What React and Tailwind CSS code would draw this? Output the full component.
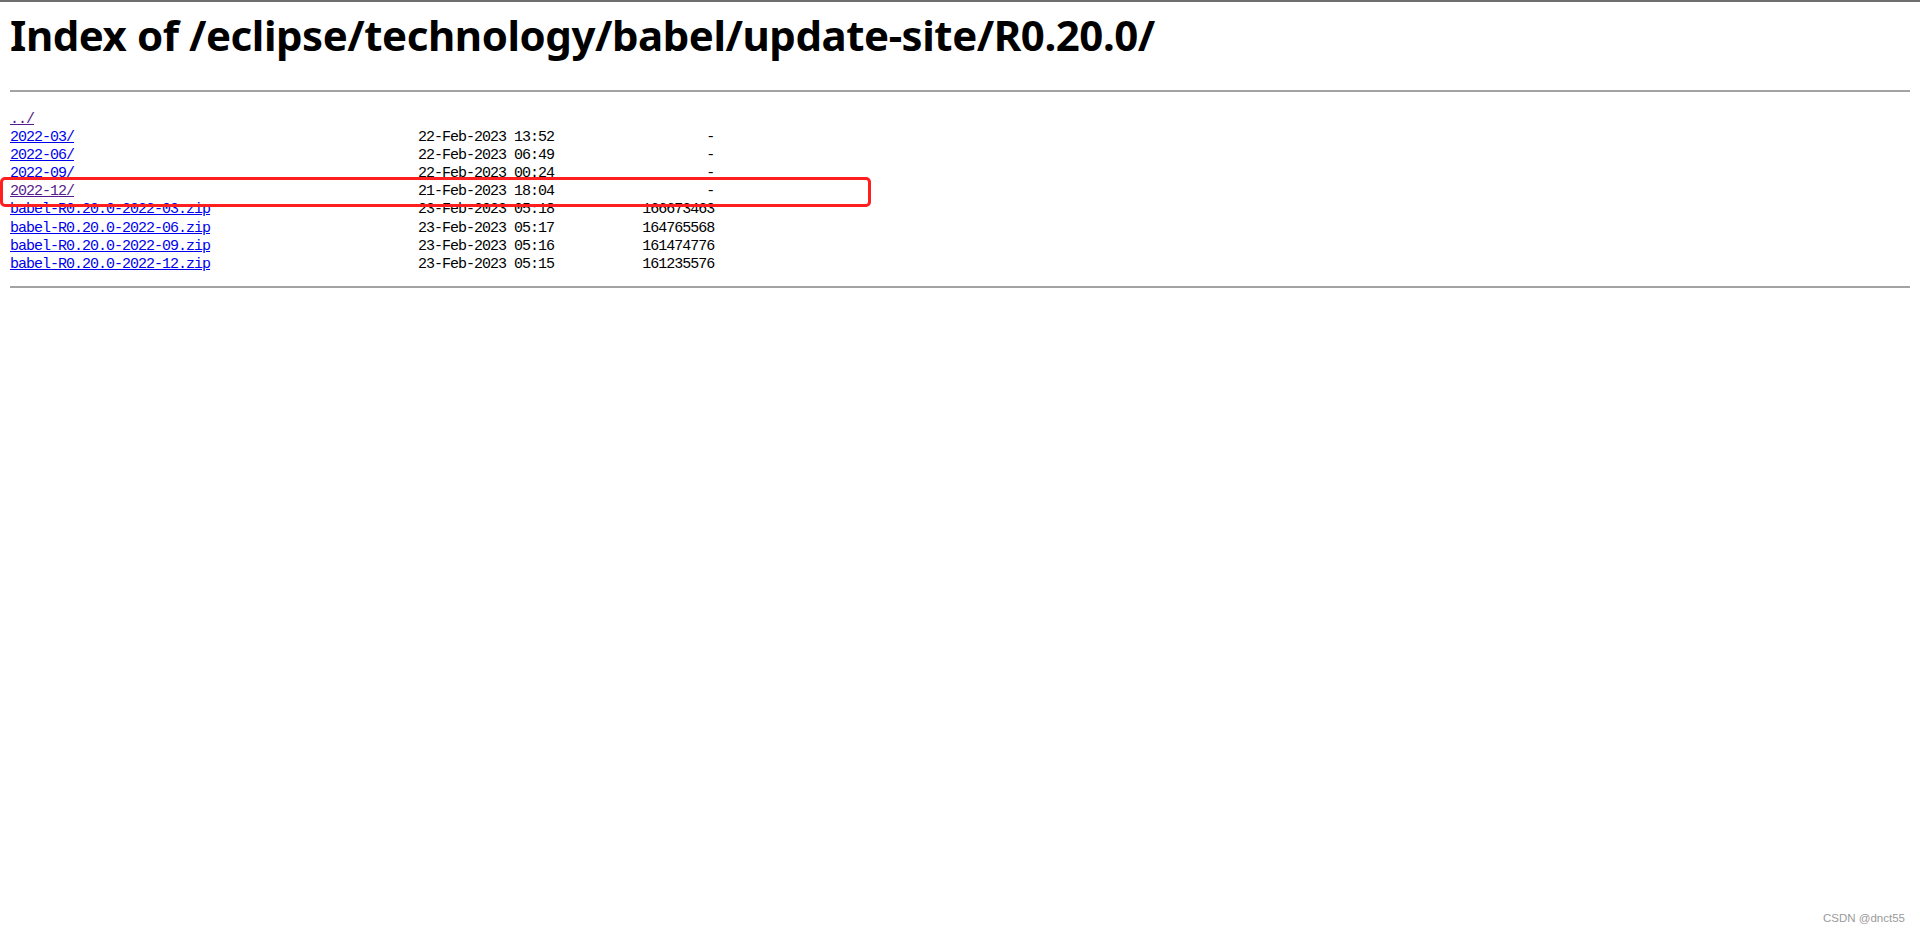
import React from "react";

const rows = [
  { name: "../", date: "", size: "", visited: true },
  { name: "2022-03/", date: "22-Feb-2023 13:52", size: "-" },
  { name: "2022-06/", date: "22-Feb-2023 06:49", size: "-" },
  { name: "2022-09/", date: "22-Feb-2023 00:24", size: "-" },
  { name: "2022-12/", date: "21-Feb-2023 18:04", size: "-", visited: true },
  { name: "babel-R0.20.0-2022-03.zip", date: "23-Feb-2023 05:18", size: "166673463" },
  { name: "babel-R0.20.0-2022-06.zip", date: "23-Feb-2023 05:17", size: "164765568" },
  { name: "babel-R0.20.0-2022-09.zip", date: "23-Feb-2023 05:16", size: "161474776" },
  { name: "babel-R0.20.0-2022-12.zip", date: "23-Feb-2023 05:15", size: "161235576" },
];

export default function App() {
  return (
    <div className="relative min-h-[932px] w-full bg-white">
      <div className="h-[2px] bg-[#6e6e6e]" />
      <div className="px-[10px]">
        <h1 className="mt-[12px] text-[42px] leading-[42px] font-bold text-black tracking-[-0.45px] font-['Noto_Sans',sans-serif] whitespace-nowrap">
          Index of /eclipse/technology/babel/update-site/R0.20.0/
        </h1>
        <div className="mt-[34px] h-[2px] bg-[#a3a3a3]" />
        <pre className="mt-[19px] font-['Liberation_Mono',monospace] text-[15px] leading-[18.1px] tracking-[-1px] text-black">
          {rows.map((r, i) => (
            <div key={i} className="whitespace-pre">
              <a
                href="#"
                className={
                  "underline " + (r.visited ? "text-[#551a8b]" : "text-[#0000ee]")
                }
              >
                {r.name}
              </a>
              {r.date
                ? " ".repeat(51 - r.name.length) + r.date + r.size.padStart(20, " ")
                : ""}
            </div>
          ))}
        </pre>
        <div className="mt-[12px] h-[2px] bg-[#a3a3a3]" />
      </div>
      <div className="absolute left-0 top-[177px] w-[871px] h-[30px] border-[3px] border-[#ff1f1f] rounded-[5px] pointer-events-none" />
      <div className="absolute right-[15px] top-[910px] text-[11.5px] text-[#9a9a9a] font-['Liberation_Sans',sans-serif]">
        CSDN @dnct55
      </div>
    </div>
  );
}
